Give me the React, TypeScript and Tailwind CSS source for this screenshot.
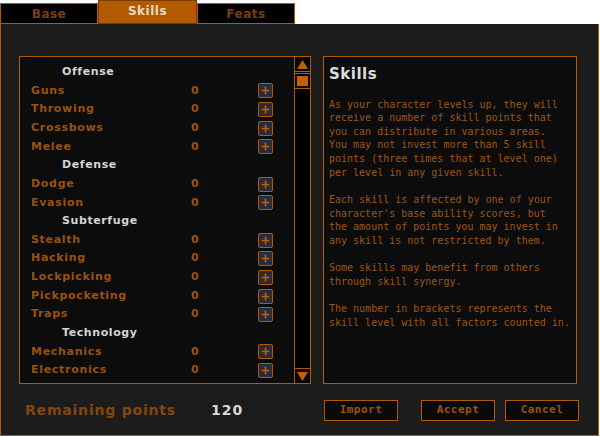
import { Plus } from "lucide-react";

type Row = { kind: "head"; name: string } | { kind: "skill"; name: string; value: number };

const rows: Row[] = [
  { kind: "head", name: "Offense" },
  { kind: "skill", name: "Guns", value: 0 },
  { kind: "skill", name: "Throwing", value: 0 },
  { kind: "skill", name: "Crossbows", value: 0 },
  { kind: "skill", name: "Melee", value: 0 },
  { kind: "head", name: "Defense" },
  { kind: "skill", name: "Dodge", value: 0 },
  { kind: "skill", name: "Evasion", value: 0 },
  { kind: "head", name: "Subterfuge" },
  { kind: "skill", name: "Stealth", value: 0 },
  { kind: "skill", name: "Hacking", value: 0 },
  { kind: "skill", name: "Lockpicking", value: 0 },
  { kind: "skill", name: "Pickpocketing", value: 0 },
  { kind: "skill", name: "Traps", value: 0 },
  { kind: "head", name: "Technology" },
  { kind: "skill", name: "Mechanics", value: 0 },
  { kind: "skill", name: "Electronics", value: 0 },
];

const description = [
  "As your character levels up, they will",
  "receive a number of skill points that",
  "you can distribute in various areas.",
  "You may not invest more than 5 skill",
  "points (three times that at level one)",
  "per level in any given skill.",
  "",
  "Each skill is affected by one of your",
  "character's base ability scores, but",
  "the amount of points you may invest in",
  "any skill is not restricted by them.",
  "",
  "Some skills may benefit from others",
  "through skill synergy.",
  "",
  "The number in brackets represents the",
  "skill level with all factors counted in.",
];

const sans = "font-['DejaVu_Sans',sans-serif]";

function Tab({ label, active }: { label: string; active?: boolean }) {
  if (active) {
    return (
      <div className={`flex h-[24px] w-[99px] items-center justify-center border border-[#7a3d00] bg-[#b35900] pb-[2px] text-[12px] font-bold tracking-[0.5px] text-[#ecd9c0] ${sans}`}>
        {label}
      </div>
    );
  }
  return (
    <div className={`flex h-[21px] w-[98px] items-center justify-center border border-[#b35900] bg-black text-[12px] font-bold tracking-[0.5px] text-[#7a3f0c] ${sans}`}>
      {label}
    </div>
  );
}

function ScrollBtn({ up }: { up?: boolean }) {
  return (
    <div className="flex h-[15px] w-full items-center justify-center border-b border-[#b35900] bg-black last:border-b-0 last:border-t">
      <svg width="11" height="9" viewBox="0 0 11 9">
        {up ? <polygon points="5.5,0 11,9 0,9" fill="#c06000" /> : <polygon points="0,0 11,0 5.5,9" fill="#c06000" />}
      </svg>
    </div>
  );
}

export default function App() {
  return (
    <div className="h-[437px] w-[600px] overflow-hidden bg-white">
      <div className="flex h-[24px] items-end">
        <Tab label="Base" />
        <Tab label="Skills" active />
        <Tab label="Feats" />
      </div>
      <div className="flex h-[412px] w-[599px] flex-col border border-t-0 border-[#b35900] bg-[#1c1c1c] px-[18px] pt-[32px]">
        <div className="flex h-[328px] gap-[12px]">
          <div className="flex w-[292px] border border-[#b35900] bg-[#0c0c0c]">
            <div className="flex-1 pt-[6px]">
              {rows.map((r) =>
                r.kind === "head" ? (
                  <div key={r.name} className={`flex h-[18.65px] items-center pl-[42px] text-[11px] font-bold tracking-[0.6px] text-[#d4d4d4] ${sans}`}>
                    {r.name}
                  </div>
                ) : (
                  <div key={r.name} className={`flex h-[18.65px] items-center text-[11px] font-bold tracking-[0.7px] text-[#9a520e] ${sans}`}>
                    <span className="w-[171px] pl-[11px]">{r.name}</span>
                    <span className="w-[67px]">{r.value}</span>
                    <button className="flex h-[15px] w-[15px] items-center justify-center rounded-[2px] border border-[#b35900] bg-[#2b2b3a]">
                      <Plus size={11} strokeWidth={3.5} color="#c06000" />
                    </button>
                  </div>
                )
              )}
            </div>
            <div className="flex w-[16px] flex-col border-l border-[#b35900] bg-black">
              <ScrollBtn up />
              <div className="mt-[1px] h-[16px] border-y border-[#b35900] p-[2px]">
                <div className="h-full w-full bg-[#c06000]" />
              </div>
              <div className="flex-1" />
              <ScrollBtn />
            </div>
          </div>
          <div className="w-[254px] border border-[#b35900] bg-[#0c0c0c] px-[5px] pt-[6px]">
            <div className={`text-[15px] font-bold tracking-[0.5px] text-[#dcdcdc] ${sans}`}>Skills</div>
            <div className="mt-[12px] font-['DejaVu_Sans_Mono',monospace] text-[10px] leading-[13.65px] text-[#a0560e]">
              {description.map((line, i) => (
                <div key={i} className="h-[13.65px] whitespace-pre">
                  {line}
                </div>
              ))}
            </div>
          </div>
        </div>
        <div className="mt-[16px] flex h-[21px] items-center">
          <span className={`w-[192px] pl-[6px] text-[14px] font-bold tracking-[0.8px] text-[#84460f] ${sans}`}>
            Remaining points
          </span>
          <span className={`text-[14px] font-bold tracking-[1px] text-[#d8d8d8] ${sans}`}>120</span>
          <div className="ml-auto mr-[1px] flex gap-[23px]">
            {["Import", "Accept", "Cancel"].map((b, i) => (
              <button
                key={b}
                className={`flex h-[21px] w-[74px] items-center justify-center border border-[#b35900] bg-[#0a0a0a] font-['DejaVu_Sans_Mono',monospace] text-[11px] font-bold tracking-[0.5px] text-[#9a520e] ${i === 2 ? "-ml-[13px]" : ""}`}
              >
                {b}
              </button>
            ))}
          </div>
        </div>
      </div>
    </div>
  );
}
